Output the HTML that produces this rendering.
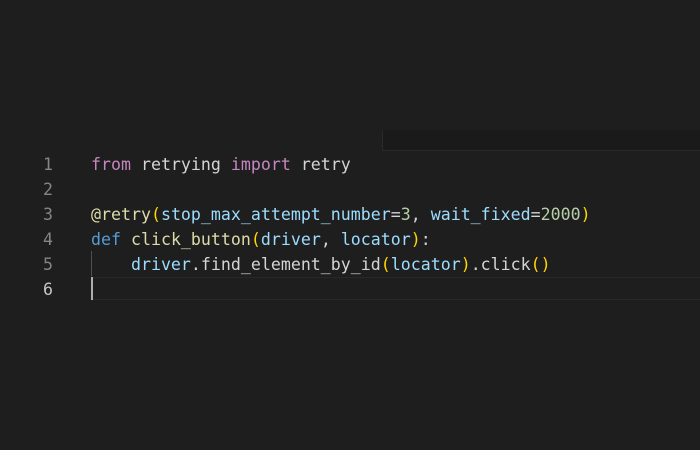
<!DOCTYPE html>
<html><head><style>
html,body{margin:0;padding:0;background:#1e1e1e;width:700px;height:450px;overflow:hidden}
.ln{position:absolute;left:0;width:53px;text-align:right;font:16.6px "DejaVu Sans Mono",monospace;color:#858585;line-height:25px}
.code{position:absolute;left:91px;font:16.6px "DejaVu Sans Mono",monospace;color:#d4d4d4;line-height:25px;white-space:pre}
.k{color:#c586c0}.b{color:#569cd6}.f{color:#dcdcaa}.v{color:#9cdcfe}.n{color:#b5cea8}.y{color:#ffd700}
</style></head><body>
<div style="position:absolute;left:382px;top:130px;width:318px;height:20px;background:#1a1a1a;border-left:1px solid #2b2b2b;border-bottom:1px solid #2b2b2b"></div>
<div style="position:absolute;left:91px;top:277px;width:609px;height:21px;border-top:1px solid #282828;border-bottom:1px solid #282828"></div>
<div style="position:absolute;left:91px;top:251px;width:1px;height:25px;background:#505050"></div>
<div style="position:absolute;left:91px;top:277px;width:2px;height:23px;background:#aeafad"></div>
<div class="ln" style="top:152px">1</div>
<div class="ln" style="top:177px">2</div>
<div class="ln" style="top:202px">3</div>
<div class="ln" style="top:227px">4</div>
<div class="ln" style="top:252px">5</div>
<div class="ln" style="top:277px;color:#c6c6c6">6</div>
<div class="code" style="top:152px"><span class="k">from</span> retrying <span class="k">import</span> retry</div>
<div class="code" style="top:202px"><span class="f">@retry</span><span class="y">(</span><span class="v">stop_max_attempt_number</span>=<span class="n">3</span>, <span class="v">wait_fixed</span>=<span class="n">2000</span><span class="y">)</span></div>
<div class="code" style="top:227px"><span class="b">def</span> <span class="f">click_button</span><span class="y">(</span><span class="v">driver</span>, <span class="v">locator</span><span class="y">)</span>:</div>
<div class="code" style="top:252px">    <span class="v">driver</span>.find_element_by_id<span class="y">(</span><span class="v">locator</span><span class="y">)</span>.click<span class="y">()</span></div>
</body></html>
